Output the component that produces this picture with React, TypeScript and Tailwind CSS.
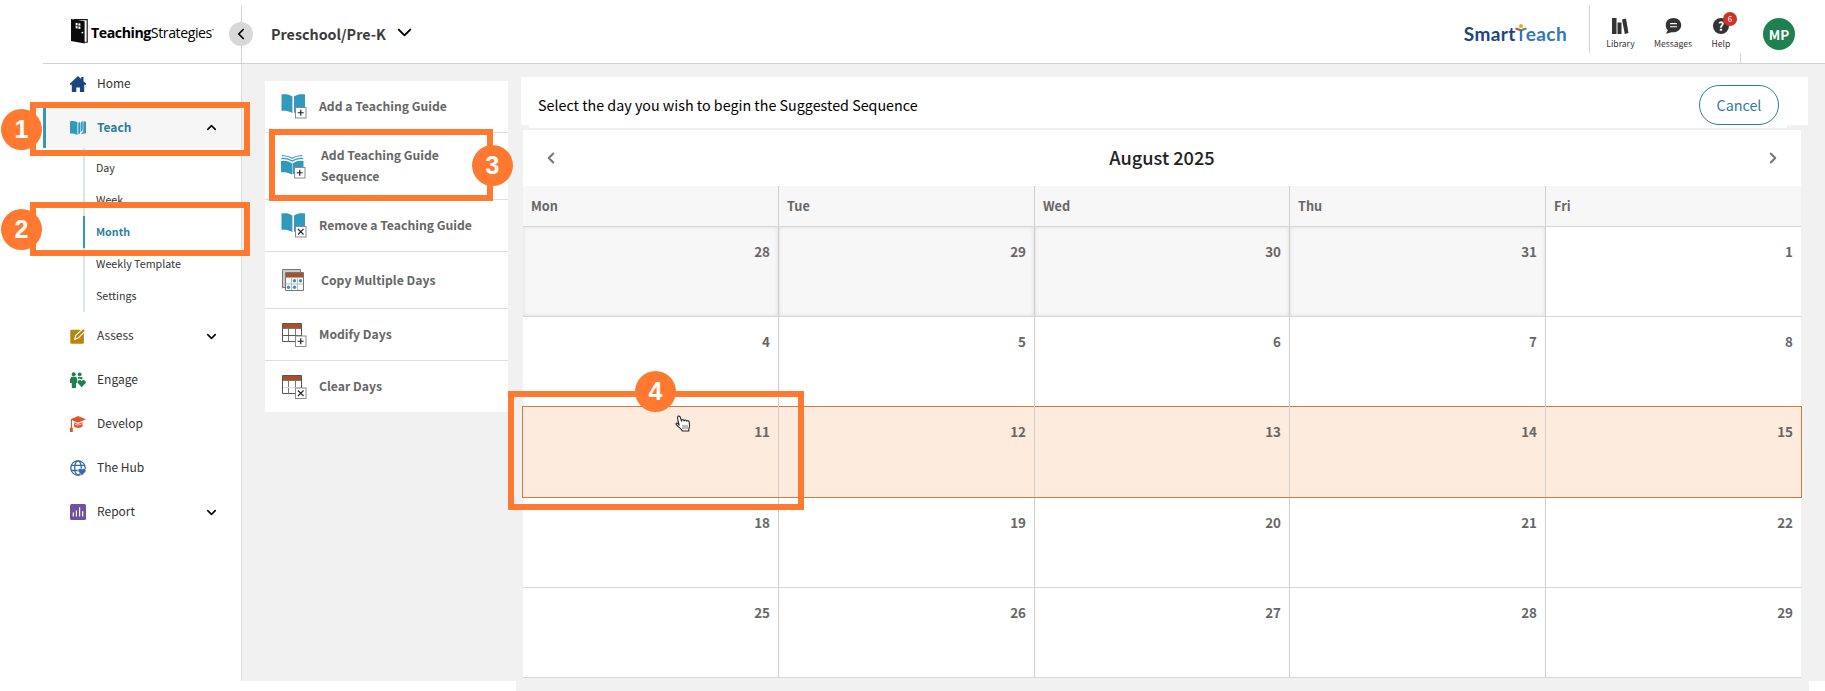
import { ChevronDown, ChevronLeft, ChevronRight, ChevronUp } from "lucide-react";
import type { ReactNode } from "react";

const weekDays = ["Mon", "Tue", "Wed", "Thu", "Fri"];

const weeks = [
    [28, 29, 30, 31, 1],
    [4, 5, 6, 7, 8],
    [11, 12, 13, 14, 15],
    [18, 19, 20, 21, 22],
    [25, 26, 27, 28, 29],
];

const teachItems = ["Day", "Week", "Month", "Weekly Template", "Settings"];

function DoorIcon() {
    return (
        <svg width="17" height="25" viewBox="0 0 17 25">
            <path d="M3 .6h13.2v22.6h-3" fill="none" stroke="#111" strokeWidth="1.1" />
            <path d="M0 0l13.6 2.2v22.4L0 22z" fill="#0a0a0a" />
            <path
                d="M4.6 3.8l2 .3v2.3l-2-.2zM7.4 4.2l2 .3v2.3l-2-.3zM4.6 7l2 .2v2.2l-2-.1zM7.4 7.4l2 .2v2.3l-2-.2z"
                fill="#fff"
            />
            <circle cx="11.4" cy="13.6" r="0.9" fill="#fff" />
        </svg>
    );
}

function HomeIcon() {
    return (
        <svg width="16" height="16" viewBox="0 0 16 16" fill="#1b4480">
            <path d="M8 0l3.2 3V1h2.3v4.2L16 7.6v1.1h-1.8V16H9.9v-4.5H6.3V16H1.8V8.700H0V7.600z" />
        </svg>
    );
}

function TeachIcon() {
    return (
        <svg width="16" height="15" viewBox="0 0 16 15" fill="#3299bd">
            <path d="M0 1.200C2.800.8 5 1 7.400 2.200V15C5 13.600 2.500 13.300 0 13.400z" />
            <path d="M8.300 2.700L10 2v11.200l-1.700 1.300zM10.600 2.700L12.700.8v9.500l-2.100 1.900zM13.300 1.400H16v11.900l-5.200.7 2.500-2.600z" />
        </svg>
    );
}

function AssessIcon() {
    return (
        <svg width="16" height="16" viewBox="0 0 16 16">
            <path d="M1.500 3h11.200v11.500H1.500z" fill="#b8860f" stroke="#b8860f" strokeWidth="2.400" strokeLinejoin="round" />
            <path d="M4.700 11.300l1.100-3.900L13.200.4l2.300 2.300-7.300 7.400z" fill="#b8860f" stroke="#fff" strokeWidth="1.100" />
        </svg>
    );
}

function EngageIcon() {
    return (
        <svg width="16" height="16" viewBox="0 0 16 16" fill="#1f8050">
            <circle cx="3.700" cy="2.200" r="2" />
            <path d="M1.500 4.800h4.600L7.200 7v4H6v5H1.800v-5H0V7z" />
            <circle cx="9.700" cy="2.300" r="1.900" />
            <path d="M8 5h4l.7 1.300-1.200 1.200L9.700 6.600l-2 .5z" />
            <path d="M11.600 15.200L7.800 11C7 8.600 9.700 7 11.600 9c1.800-2 4.700-.3 4.200 2z" />
        </svg>
    );
}

function DevelopIcon() {
    return (
        <svg width="16" height="16" viewBox="0 0 16 16" fill="#e0532d">
            <path d="M8 0l8 3.300-8 3.400-6-2.500v7.600h.8V16H0v-4.200h.9V3.300z" />
            <path d="M4 6.300l4 1.700 4.600-1.900v4.200C10.500 12.500 6 12.400 4 10.300z" />
            <path d="M4 7.300c1 2.200 7 2.200 8.600-.2" fill="none" stroke="#fff" strokeWidth=".7" />
        </svg>
    );
}

function HubIcon() {
    return (
        <svg width="16" height="16" viewBox="0 0 16 16" fill="none" stroke="#3568b1" strokeWidth="1.300">
            <circle cx="8" cy="8" r="7.200" />
            <ellipse cx="8" cy="8" rx="3.300" ry="7.200" />
            <path d="M1 5.300h14M1 10.500h7" />
            <path
                d="M12 15.600L8.200 11.500c-.9-2.700 2-4 3.800-2.200 1.700-1.800 4.600-.4 3.800 2.200z"
                fill="#3568b1"
                stroke="#fff"
                strokeWidth=".6"
            />
        </svg>
    );
}

function ReportIcon() {
    return (
        <svg width="16" height="16" viewBox="0 0 16 16">
            <rect width="16" height="16" rx="1.500" fill="#7250a0" />
            <path
                d="M3.300 12.500V8.500M6.400 12.500V6.500M9.600 12.500V3.200M12.700 12.500V7.200"
                stroke="#fff"
                strokeWidth="1.200"
            />
        </svg>
    );
}

function Mark({ kind, x, y }: { kind: "plus" | "cross"; x: number; y: number }) {
    return (
        <g transform={`translate(${x} ${y})`}>
            <rect x=".5" y=".5" width="10.500" height="10.500" fill="#fff" stroke="#8a8a8a" />
            {kind === "plus" ? (
                <path d="M2.700 5.750h6M5.750 2.700v6" stroke="#222" strokeWidth="1.200" />
            ) : (
                <path d="M3 3l5.500 5.500M8.500 3L3 8.500" stroke="#222" strokeWidth="1.100" />
            )}
        </g>
    );
}

function GuideIcon({ kind }: { kind: "plus" | "cross" }) {
    return (
        <svg width="26" height="25" viewBox="0 0 26 25">
            <path
                d="M.5.500C4.500 0 8 .300 11.400 2.400V19C8 17 4.500 16.500.500 16.700zM24 .500C20 0 16.500.300 13 2.400V19c3.500-2 7-2.500 11-2.300z"
                fill="#3299bd"
            />
            <Mark kind={kind} x={14} y={13} />
        </svg>
    );
}

function SequenceIcon() {
    return (
        <svg width="26" height="25" viewBox="0 0 26 25">
            <path
                d="M0 7c4-.5 7.500.2 11 2.400V20.500C7.500 18.500 4 18 0 18.200zM22.500 7c-4-.5-7.500.2-11 2.400V20.500c3.500-2 7-2.500 11-2.300z"
                fill="#3299bd"
            />
            <path
                d="M.3 4.600c4-.5 7.500.2 10.900 2.500C14.700 4.800 18.200 4.100 22.200 4.600M1 1.800c3.700-.3 7 .3 10.200 2.400 3.200-2.100 6.500-2.700 10.200-2.400"
                fill="none"
                stroke="#3299bd"
                strokeWidth="1.200"
            />
            <Mark kind="plus" x={13} y={13} />
        </svg>
    );
}

function CopyDaysIcon() {
    return (
        <svg width="26" height="25" viewBox="0 0 26 25">
            <path d="M1.500 1.500h18v18h-18z" fill="#ccc" stroke="#777" />
            <path d="M4.500 4.500h18v18h-18z" fill="#fff" stroke="#777" />
            <path d="M5 5h17v4.500H5z" fill="#a8502a" />
            <path d="M5 9.500h17M5 16h17M10.500 9.500v12.500M16.500 9.500v12.500" stroke="#aaa" strokeWidth=".8" />
            <g fill="#3299bd">
                <circle cx="13.500" cy="12.800" r="1.700" />
                <circle cx="19.500" cy="12.800" r="1.700" />
                <circle cx="7.500" cy="19.200" r="1.700" />
                <circle cx="13.500" cy="19.200" r="1.700" />
            </g>
        </svg>
    );
}

function DaysIcon({ kind }: { kind: "plus" | "cross" }) {
    return (
        <svg width="26" height="25" viewBox="0 0 26 25">
            <path d="M1.500 1.500h19v18h-19z" fill="#fff" stroke="#555" />
            <path d="M2 2h18v4.300H2z" fill="#a8502a" />
            <path d="M2 6.500h18M7.500 6.500v13M14.500 6.500v13" stroke="#777" />
            <path d="M2 13.500h18" stroke={kind === "plus" ? "#555" : "#ddd"} />
            <Mark kind={kind} x={14} y={13.500} />
        </svg>
    );
}

const mainNav = [
    { label: "Assess", icon: <AssessIcon />, expandable: true },
    { label: "Engage", icon: <EngageIcon />, expandable: false },
    { label: "Develop", icon: <DevelopIcon />, expandable: false },
    { label: "The Hub", icon: <HubIcon />, expandable: false },
    { label: "Report", icon: <ReportIcon />, expandable: true },
];

const actions = [
    { label: "Add a Teaching Guide", icon: <GuideIcon kind="plus" />, size: "h-[52px]", text: "ml-[12px]" },
    { label: "Add Teaching Guide Sequence", icon: <SequenceIcon />, size: "h-[67px]", text: "ml-[14px] w-[130px]" },
    { label: "Remove a Teaching Guide", icon: <GuideIcon kind="cross" />, size: "h-[52px]", text: "ml-[12px]" },
    { label: "Copy Multiple Days", icon: <CopyDaysIcon />, size: "h-[57px]", text: "ml-[14px]" },
    { label: "Modify Days", icon: <DaysIcon kind="plus" />, size: "h-[52px]", text: "ml-[12px]" },
    { label: "Clear Days", icon: <DaysIcon kind="cross" />, size: "h-[51px]", text: "ml-[12px]" },
];

function SmartTeachLogo() {
    return (
        <div className="flex items-baseline font-['Lato'] text-[19px] leading-[24px] font-bold tracking-[0.4px]">
            <span className="text-[#1f4482]">Smart</span>
            <svg width="12" height="17" viewBox="0 0 12 17" className="-mr-px -ml-px">
                <circle cx="6" cy="2" r="2" fill="#f2a32c" />
                <path d="M.5 4.500L6 6.300" stroke="#d9462f" strokeWidth="2" />
                <path d="M6 6.300l5.500-1.800" stroke="#3a9b57" strokeWidth="2" />
                <path d="M6 6v11" stroke="#2f77bd" strokeWidth="2.300" />
            </svg>
            <span className="text-[#2f77bd]">each</span>
        </div>
    );
}

function TopLink({ label, className, children }: { label: string; className: string; children: ReactNode }) {
    return (
        <div className={`flex flex-col items-center pt-[18px] ${className}`}>
            {children}
            <span className="mt-[2px] text-[8.600px] leading-[14px] whitespace-nowrap text-[#333]">{label}</span>
        </div>
    );
}

function Header() {
    return (
        <header className="ml-[43px] flex h-16 border-b border-[#d2d2d2]">
            <div className="relative mt-[6px] flex h-[57px] w-[199px] border-r border-[#d2d2d2] pl-7">
                <div className="mt-[13px]">
                    <DoorIcon />
                </div>
                <div className="mt-[14px] ml-[3px] font-['Open_Sans'] text-[14.200px] leading-[20px] tracking-[-0.45px] whitespace-nowrap text-black">
                    <span className="font-bold">Teaching</span>
                    <span>Strategies</span>
                    <span className="align-super text-[5px]">•</span>
                </div>
                <button className="absolute top-4 -right-[12px] flex size-6 items-center justify-center rounded-full bg-[#d8d8d8]">
                    <ChevronLeft size={18} strokeWidth={2.300} className="text-black" />
                </button>
            </div>
            <div className="flex pt-[22px] pl-[29px]">
                <h1 className="text-[14.300px] leading-6 font-bold whitespace-nowrap text-[#3a3a3a]">Preschool/Pre-K</h1>
                <ChevronDown size={23} strokeWidth={2.100} className="-mt-px ml-[7px] text-black" />
            </div>
            <div className="mr-[22px] ml-auto pt-[22px]">
                <SmartTeachLogo />
            </div>
            <div className="mt-[6px] h-[47px] w-px bg-[#d2d2d2]" />
            <div className="flex w-[235px]">
                <TopLink label="Library" className="ml-[11px] w-[39px]">
                    <svg width="17" height="16" viewBox="0 0 17 16" fill="#333">
                        <path d="M0 0h4.500v16H0zM5.500 4.500h4V16h-4zM10 1.500L14 .5 16.500 15l-3.700 1z" />
                    </svg>
                </TopLink>
                <TopLink label="Messages" className="ml-[13px] w-[40px]">
                    <svg width="17" height="16" viewBox="0 0 17 16">
                        <path
                            d="M8.500 0C3.800 0 .8 3 .8 7c0 2.200.8 4 2 5.200L1 15.700l5.500-1.500c6 .6 9.700-2.700 9.700-7.200C16.200 3 13 0 8.500 0z"
                            fill="#333"
                        />
                        <path d="M5 5.600h7M5 8.700h7" stroke="#fff" strokeWidth="1.100" />
                    </svg>
                </TopLink>
                <TopLink label="Help" className="relative ml-[16px] w-[24px]">
                    <span className="flex size-4 items-center justify-center rounded-full bg-[#333] text-[12px] leading-4 font-bold text-white">
                        ?
                    </span>
                    <span className="absolute top-3 left-[14px] flex size-[14px] items-center justify-center rounded-full bg-[#c9342b] text-[8px] text-white">
                        6
                    </span>
                </TopLink>
                <div className="mt-[54px] ml-[7px] h-[9px] w-px bg-[#d2d2d2]" />
                <div className="mt-[18px] ml-[22px] flex size-8 items-center justify-center rounded-full bg-[#1f8050] text-[13.500px] font-bold text-white">
                    MP
                </div>
            </div>
        </header>
    );
}

function Sidebar() {
    return (
        <nav className="ml-[43px] h-[617px] w-[199px] shrink-0 border-r border-[#dedede] text-[12px] text-[#333]">
            <div className="flex h-[43px] items-center pb-[4px] pl-[27px]">
                <HomeIcon />
                <span className="-mt-px ml-[11px]">Home</span>
            </div>
            <div className="flex h-[41px] items-center border-l-3 border-[#3299bd] bg-[#f6f6f6] pr-[22px] pl-6">
                <TeachIcon />
                <span className="-mt-px ml-[11px] font-bold text-[#2a7f9a]">Teach</span>
                <ChevronUp size={15} strokeWidth={2.400} className="ml-auto text-black" />
            </div>
            <ul className="mb-[2px] ml-[40px] h-[164px] border-l-2 border-[#d6e8ed] pt-[4px] text-[10.700px]">
                {teachItems.map((item) => (
                    <li
                        key={item}
                        className={
                            item === "Month"
                                ? "-ml-[2px] flex h-8 items-center border-l-2 border-[#3299bd] pl-[11px] font-bold text-[#2a7f9a]"
                                : "flex h-8 items-center pl-[11px]"
                        }
                    >
                        {item}
                    </li>
                ))}
            </ul>
            {mainNav.map((item) => (
                <div key={item.label} className="flex h-11 items-center pr-[22px] pl-[27px]">
                    {item.icon}
                    <span className="-mt-[2px] ml-[11px]">{item.label}</span>
                    {item.expandable && (
                        <ChevronDown size={15} strokeWidth={2.400} className="ml-auto text-black" />
                    )}
                </div>
            ))}
        </nav>
    );
}

function Actions() {
    return (
        <aside className="h-[617px] w-[274px] shrink-0 bg-[#f1f1f1] pt-[17px] pl-[23px]">
            <div className="w-[243px] divide-y divide-[#dedede] bg-white">
                {actions.map((action) => (
                    <div key={action.label} className={`flex items-center pl-4 ${action.size}`}>
                        {action.icon}
                        <span className={`text-[12.200px] leading-[21px] font-bold text-[#666] ${action.text}`}>
                            {action.label}
                        </span>
                    </div>
                ))}
            </div>
        </aside>
    );
}

function weekClass(row: number) {
    if (row === 1) return "grid h-[90px] grid-cols-[255px_256px_255px_256px_256px]";
    if (row === 2)
        return "-mt-px -ml-px grid h-[92px] w-[1280px] grid-cols-[255px_256px_255px_256px_256px] border border-[#dd783c] bg-[#fdebde]";
    return "grid h-[90px] grid-cols-[255px_256px_255px_256px_256px] border-b border-[#d6d6d6]";
}

function Calendar() {
    return (
        <main className="h-[627px] w-[1293px] shrink-0 bg-[#f1f1f1] pt-[13px]">
            <div className="ml-[5px] flex h-[48px] w-[1287px] items-center justify-between bg-white pt-[8px] pr-[29px] pl-[17px]">
                <p className="text-[14.300px] text-black">Select the day you wish to begin the Suggested Sequence</p>
                <button className="h-10 w-20 shrink-0 rounded-full border border-[#2a7f9a] bg-white text-[14.300px] text-[#2a7f9a]">
                    Cancel
                </button>
            </div>
            <div className="ml-[13px] h-[3px] w-[1258px] bg-white" />
            <section className="mt-[2px] ml-[7px] w-[1278px] bg-white">
                <div className="flex h-[56px] items-center justify-between px-[19px]">
                    <ChevronLeft size={18} strokeWidth={2.800} className="text-[#777]" />
                    <h2 className="-mt-px text-[18.200px] font-medium text-[#222]">August 2025</h2>
                    <ChevronRight size={18} strokeWidth={2.800} className="text-[#777]" />
                </div>
                <div className="grid h-[41px] grid-cols-[255px_256px_255px_256px_256px] border-b border-[#d6d6d6] bg-[#f7f7f7]">
                    {weekDays.map((day) => (
                        <div
                            key={day}
                            className="flex items-center border-[#cfcfcf] pl-2 text-[12.700px] font-bold text-[#666] not-first:border-l"
                        >
                            {day}
                        </div>
                    ))}
                </div>
                {weeks.map((week, row) => (
                    <div key={row} className={weekClass(row)}>
                        {week.map((date, col) => (
                            <div
                                key={date}
                                className={
                                    row === 0 && col < 4
                                        ? "border-[#cfcfcf] bg-[#f7f7f7] pt-[14px] pr-[8px] text-right text-[13.400px] leading-[21px] font-bold text-[#666] shadow-[inset_0_0_4px_#ddd] not-first:border-l"
                                        : "border-[#cfcfcf] pt-[14px] pr-[8px] text-right text-[13.400px] leading-[21px] font-bold text-[#666] not-first:border-l"
                                }
                            >
                                {date}
                            </div>
                        ))}
                    </div>
                ))}
            </section>
        </main>
    );
}

function Badge({ step, className }: { step: number; className: string }) {
    return (
        <div
            className={`absolute flex size-[41px] items-center justify-center rounded-full bg-[#ff7a30] font-['Liberation_Sans'] text-[25px] leading-none font-bold text-white ${className}`}
        >
            {step}
        </div>
    );
}

// numbered walkthrough markers laid over the page
function Callouts() {
    return (
        <>
            <div className="absolute top-[102px] left-[30px] h-[54px] w-[220px] border-6 border-[#ff7a30]" />
            <div className="absolute top-[202px] left-[30px] h-[54px] w-[220px] border-6 border-[#ff7a30]" />
            <div className="absolute top-[129px] left-[269px] h-[72px] w-[224px] border-6 border-[#ff7a30]" />
            <div className="absolute top-[391px] left-[508px] h-[119px] w-[296px] border-6 border-[#ff7a30]" />
            <Badge step={1} className="top-[109px] left-[1px]" />
            <Badge step={2} className="top-[209px] left-[1px]" />
            <Badge step={3} className="top-[145px] left-[472px]" />
            <Badge step={4} className="top-[371px] left-[635px]" />
            <svg width="17" height="18" viewBox="0 0 17 18" className="absolute top-[415px] left-[675px]">
                <path
                    d="M4.200 10.500L3 5.500C2.500 3.500 2 2 3 1.300c1.200-.8 2 .2 2.500 1.700l1 2.700c.3-1.300 2.200-1.200 2.600 0 .6-1 2.200-.8 2.600.4.800-.7 2.300-.3 2.500.9.500 2.500.9 4.500-.3 6.700l-.2 2.300H7.300c-.6-2-2.500-3-4-4.400C1.500 10 .5 9 1.300 8.200c.8-.6 2 .5 2.900 2.300z"
                    fill="#fff"
                    stroke="#222"
                    strokeWidth="1.100"
                />
                <path d="M8 10v4M10 10v4M12 10v4" stroke="#555" strokeWidth=".8" />
            </svg>
        </>
    );
}

export default function App() {
    return (
        <div className="relative h-[691px] w-[1825px] overflow-hidden bg-white font-['Noto_Sans_CJK_SC','Source_Sans_Pro',sans-serif]">
            <Header />
            <div className="flex items-start">
                <Sidebar />
                <Actions />
                <Calendar />
                <div className="h-[617px] w-4 bg-[#f1f1f1]" />
            </div>
            <Callouts />
        </div>
    );
}
